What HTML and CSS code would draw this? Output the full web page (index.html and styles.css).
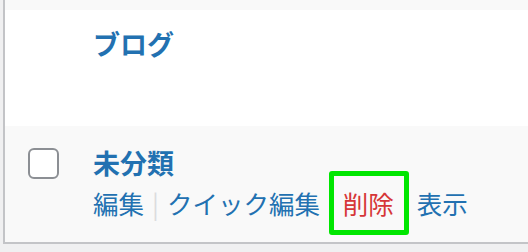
FILE: index.html
```html
<!DOCTYPE html>
<html lang="ja">
<head>
    <meta charset="UTF-8">
    <title>カテゴリー</title>
    <link rel="stylesheet" href="styles.css">
</head>
<body>
    <div class="wrap">
        <div class="list">
            <!-- 前の行の下端 -->
            <div class="row-stub"></div>

            <div class="row">
                <div class="check-col"></div>
                <div class="name-col">
                    <a class="row-title" href="#">ブログ</a>
                </div>
            </div>

            <div class="row alt">
                <div class="check-col">
                    <span class="checkbox"></span>
                </div>
                <div class="name-col">
                    <a class="row-title" href="#">未分類</a>
                    <div class="row-actions">
                        <span><a href="#">編集</a><span class="sep">|</span></span>
                        <span><a href="#">クイック編集</a><span class="sep">|</span></span>
                        <span class="delete"><a href="#">削除</a><span class="sep">|</span><span class="highlight"></span></span>
                        <span><a href="#">表示</a></span>
                    </div>
                </div>
            </div>
        </div>
    </div>
</body>
</html>
```

FILE: styles.css
```css
body {
    margin: 0;
    background: #f0f0f1;
    font-family: "Noto Sans CJK JP", "Noto Sans", sans-serif;
}
a {
    text-decoration: none;
    color: #2271b1;
}
.wrap {
    padding-left: 3px;
}
.list {
    background: #fff;
    border-left: 2px solid #c3c4c7;
    border-bottom: 2px solid #c3c4c7;
    height: 242px;
    overflow: hidden;
}
.row-stub {
    height: 10px;
    background: #f9f9f9;
}
.row {
    display: flex;
    height: 116px;
    box-sizing: border-box;
    padding-top: 16px;
}
.row.alt {
    background: #f9f9f9;
    padding-top: 19px;
}
.check-col {
    width: 88px;
    flex: none;
}
.checkbox {
    display: block;
    width: 27px;
    height: 27px;
    margin: 3px 0 0 23px;
    border: 2px solid #8c8f94;
    border-radius: 6px;
    background: #fff;
}
.row-title {
    display: block;
    font-size: 27px;
    font-weight: bold;
    line-height: 36px;
}
.row-actions {
    display: flex;
    margin-top: 4px;
    font-size: 25.5px;
    line-height: 36px;
    white-space: nowrap;
}
.sep {
    color: #dcdcde;
    margin: 0 8px;
}
.delete {
    position: relative;
}
.delete a {
    color: #d63638;
}
.highlight {
    position: absolute;
    left: -14px;
    top: -14px;
    width: 70px;
    height: 54px;
    border: 5px solid #00e600;
    border-radius: 3px;
}
```
